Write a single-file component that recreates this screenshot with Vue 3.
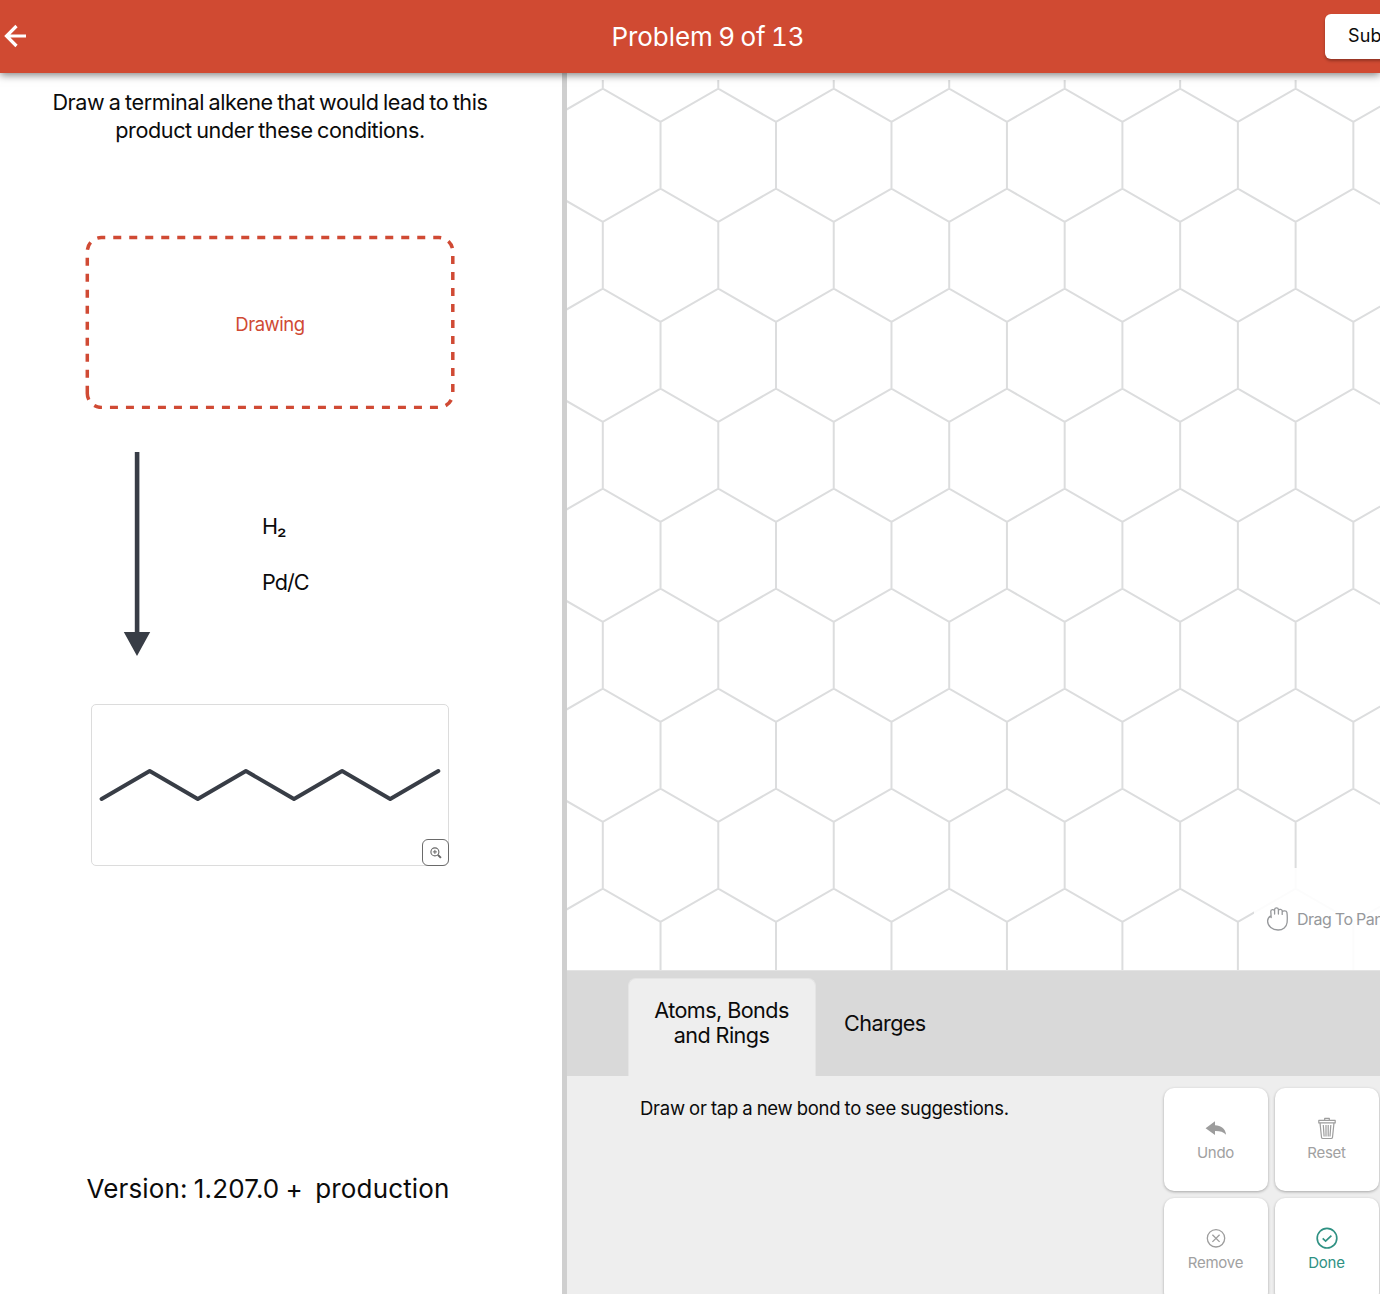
<template>
  <div class="app">
    <header class="header">
      <button class="back" aria-label="Back">
        <svg width="24" height="24" viewBox="0 0 24 24" fill="none" stroke="#fff" stroke-width="3.2">
          <path d="M23 12H4M13.500 2L3.500 12l10 10" />
        </svg>
      </button>
      <h1>Problem 9 of 13</h1>
      <button class="submit">Submit</button>
    </header>

    <main class="main">
      <section class="problem">
        <p class="prompt">Draw a terminal alkene that would lead to this<br />product under these conditions.</p>

        <div class="drop-target">
          <svg class="dashes" width="370" height="174" viewBox="0 0 370 174">
            <path
              d="M2.3 158.7V16.5a14 14 0 0 1 14-14H353.8a14 14 0 0 1 14 14V158.4a14 14 0 0 1-14 14H16.3a14 14 0 0 1-14-14"
              fill="none"
              stroke="#d04a34"
              stroke-width="3.5"
              stroke-dasharray="8 8"
            />
          </svg>
          <span>Drawing</span>
        </div>

        <div class="reaction">
          <svg width="28" height="205" viewBox="0 0 28 205" fill="#383d46">
            <path d="M11.8 0h4.6v180h10.8L14 204 .8 180h11z" />
          </svg>
          <div class="reagents">
            <p v-for="reagent in reagents" :key="reagent">{{ reagent }}</p>
          </div>
        </div>

        <div class="product">
          <svg width="356" height="160" viewBox="0 0 356 160">
            <polyline
              :points="chain"
              fill="none"
              stroke="#383d46"
              stroke-width="4"
              stroke-linecap="round"
              stroke-linejoin="round"
            />
          </svg>
          <button class="zoom" aria-label="Zoom">
            <svg width="12" height="12" viewBox="0 0 12 12" fill="none" stroke="#666">
              <circle cx="4.9" cy="4.9" r="4" stroke-width="1.1" />
              <path d="M2.9 4.9h4M4.9 2.9v4" stroke-width="1" />
              <path d="M7.9 7.9l3 3" stroke-width="2" />
            </svg>
          </button>
        </div>

        <p class="version">Version: 1.207.0 +&nbsp; production</p>
      </section>

      <section class="editor">
        <div class="board">
          <svg width="813" height="890" viewBox="0 0 813 890">
            <path :d="grid" fill="none" stroke="#dcddde" stroke-width="2" />
          </svg>
          <div class="pan-hint">
            <svg width="24" height="26" viewBox="0 0 24 26" fill="none" stroke="#96989b" stroke-width="1.3" stroke-linejoin="round" stroke-linecap="round">
              <path d="M5.2 11.500L4.800 5.400c.1-2.200 3.200-2.400 3.800-.6V3.400c.3-2 3.500-2 3.800 0v.9c.8-1.500 3.600-1.200 3.800.6v.7c1-1.100 4.300-1 4.700.7.500 3.200.4 7.600.2 10.200-.5 4.500-4.200 7.500-9 7.500-5.600 0-10.500-3.700-10.500-9 0-2.400 1.200-4 3.200-5.100M8.600 4.800v3.200M12.400 4.300v3.700M16.200 5.600v2.800" />
            </svg>
            <span>Drag To Pan</span>
          </div>
        </div>

        <nav class="tabs">
          <button class="tab active">Atoms, Bonds<br />and Rings</button>
          <button class="tab">Charges</button>
        </nav>

        <div class="palette">
          <p class="suggestion">Draw or tap a new bond to see suggestions.</p>
          <div class="actions">
            <button class="action">
              <svg width="24" height="24" viewBox="0 0 24 24" fill="#9d9d9d">
                <path d="M1.6 12.2L11 5.2v4.1c6 .3 10.3 3.1 11.1 9.5-2.8-3.3-6.5-4-11.1-3.9v4z" />
              </svg>
              Undo
            </button>
            <button class="action">
              <svg width="24" height="24" viewBox="0 0 24 24" fill="none" stroke="#9d9d9d" stroke-width="1.2" stroke-linejoin="round">
                <path d="M9.7 4V2.300h4.600V4M3.800 4.300h16.400v2.600H3.800zM5 6.900l1.500 14.400q.2 1.200 1.300 1.200h8.400q1.100 0 1.300-1.200L19 6.900M8.300 9l.8 11.500M11 9v11.500M13.200 9v11.500M15.800 9L15 20.500" />
              </svg>
              Reset
            </button>
            <button class="action">
              <svg width="24" height="24" viewBox="0 0 24 24" fill="none" stroke="#9d9d9d" stroke-width="1.3">
                <circle cx="12" cy="12.3" r="8.7" />
                <path d="M8.4 8.7l7.2 7.2M15.600 8.700l-7.200 7.200" />
              </svg>
              Remove
            </button>
            <button class="action done">
              <svg width="24" height="24" viewBox="0 0 24 24" fill="none" stroke="#2f9183">
                <circle cx="12" cy="12.2" r="9.8" stroke-width="1.7" />
                <path d="M7.7 12.4l2.9 2.7 5.8-5.5" stroke-width="1.7" />
              </svg>
              Done
            </button>
          </div>
        </div>
      </section>
    </main>
  </div>
</template>

<script setup>
import { computed } from 'vue'

const reagents = ['H₂', 'Pd/C']

// Zigzag skeleton of the product, eight carbons
const chain = Array.from({ length: 8 }, (_, i) => `${9.6 + i * 48.1},${i % 2 ? 66 : 94}`).join(' ')

// Hexagonal drawing grid
const HALF = 57.735
const grid = computed(() => {
  const originX = 35.8
  const originY = 8.6
  let d = ''
  for (let row = -1; row < 10; row++) {
    const top = originY + row * 100
    const odd = Math.abs(row % 2)
    for (let col = -2; col < 15; col++) {
      const x = originX + col * HALF
      const low = Math.abs(col % 2) !== odd
      d += `${col === -2 ? 'M' : 'L'}${x.toFixed(2)} ${(low ? top + 33.3 : top).toFixed(2)}`
    }
    for (let col = -2; col < 15; col++) {
      const low = Math.abs(col % 2) !== odd
      if (low) d += `M${(originX + col * HALF).toFixed(2)} ${(top + 33.3).toFixed(2)}v66.7`
    }
  }
  return d
})
</script>

<style>
body {
  margin: 0;
  overflow: hidden;
}
</style>

<style scoped>
.app {
  display: flex;
  flex-direction: column;
  width: 1380px;
  height: 1294px;
  overflow: hidden;
  background: #fff;
  color: #0b0b0b;
  font-family: Inter, sans-serif;
}

p,
h1 {
  margin: 0;
  font-weight: 400;
}

button {
  font: inherit;
  color: inherit;
  border: none;
  padding: 0;
  background: none;
  cursor: pointer;
  letter-spacing: inherit;
}

.header {
  position: relative;
  z-index: 1;
  flex: none;
  box-sizing: border-box;
  display: flex;
  align-items: center;
  justify-content: space-between;
  height: 73px;
  padding-left: 3px;
  background: #d04a32;
  box-shadow: 0 2px 8px rgba(0, 0, 0, 0.5);
}

.header h1 {
  color: #fff;
  font-size: 26px;
  line-height: 32px;
  margin-left: 64px;
  font-variant-numeric: tabular-nums;
  letter-spacing: -0.05px;
  word-spacing: -1.5px;
}

.back {
  display: flex;
  width: 24px;
  padding-bottom: 2px;
}

.submit {
  flex: none;
  height: 45px;
  width: 106px;
  padding-bottom: 3px;
  margin-right: -51px;
  border-radius: 6px;
  background: #fff;
  font-size: 18px;
  letter-spacing: 0.1px;
  box-shadow: 0 2px 3px rgba(0, 0, 0, 0.3);
}

.main {
  flex: 1;
  display: flex;
  min-height: 0;
}

.problem {
  flex: none;
  box-sizing: border-box;
  display: flex;
  flex-direction: column;
  align-items: center;
  width: 567px;
  padding: 15px 22px 0 0;
  border-right: 5px solid #cfcfcf;
}

.prompt {
  font-size: 21.6px;
  line-height: 28px;
  letter-spacing: -0.4px;
  word-spacing: -1.2px;
  text-align: center;
}

.drop-target {
  display: grid;
  place-items: center;
  width: 370px;
  height: 174px;
  margin-top: 91px;
  color: #d04a34;
  font-size: 18.5px;
  letter-spacing: -0.45px;
}

.drop-target > * {
  grid-area: 1 / 1;
}

.drop-target span {
  padding-top: 4px;
}

.reaction {
  display: flex;
  align-items: center;
  gap: 111px;
  width: 294px;
  margin-top: 43px;
}

.reagents {
  display: flex;
  flex-direction: column;
  gap: 28px;
  padding-bottom: 2px;
  font-size: 21.6px;
  line-height: 28px;
  letter-spacing: -1px;
}

.product {
  position: relative;
  box-sizing: border-box;
  width: 358px;
  height: 162px;
  margin-top: 47px;
  border: 1px solid #dcdcdc;
  border-radius: 5px;
}

.zoom {
  position: absolute;
  right: -1px;
  bottom: -1px;
  box-sizing: border-box;
  display: flex;
  align-items: center;
  justify-content: center;
  width: 27px;
  height: 27px;
  border: 1.5px solid #6a6a6a;
  border-radius: 6px;
  background: #fff;
}

.version {
  margin: 306px 4px 0 0;
  font-size: 26px;
  line-height: 34px;
  letter-spacing: 0.15px;
  word-spacing: -1.3px;
}

.editor {
  flex: 1;
  display: flex;
  flex-direction: column;
  min-width: 0;
}

.board {
  position: relative;
  flex: none;
  height: 890px;
  margin-top: 7px;
  overflow: hidden;
}

.pan-hint {
  position: absolute;
  left: 687px;
  bottom: 0;
  box-sizing: border-box;
  display: flex;
  align-items: center;
  gap: 7px;
  width: 160px;
  height: 102px;
  padding-left: 12px;
  background: rgba(255, 255, 255, 0.9);
  color: #96989b;
  font-size: 16px;
  letter-spacing: -0.5px;
  word-spacing: -0.5px;
  white-space: nowrap;
}

.tabs {
  flex: none;
  box-sizing: border-box;
  display: flex;
  height: 106px;
  padding: 7px 0 0 61px;
  border-top: 1px solid #e3e3e3;
  background: #d9d9d9;
  font-size: 21.6px;
  line-height: 25px;
  letter-spacing: -0.57px;
}

.tab {
  box-sizing: border-box;
  padding: 0 28px 7px;
  line-height: 25px;
}

.tab.active {
  width: 188px;
  padding: 0 1px 9px 0;
  border: 1px solid #e5e5e5;
  border-bottom: none;
  border-radius: 8px 8px 0 0;
  background: #eee;
}

.palette {
  flex: 1;
  display: flex;
  justify-content: space-between;
  min-height: 0;
  padding-left: 73px;
  background: #eee;
}

.suggestion {
  margin-top: 20px;
  font-size: 18.5px;
  line-height: 25px;
  letter-spacing: -0.25px;
  word-spacing: -0.7px;
}

.actions {
  display: grid;
  grid-template-columns: 104px 104px;
  grid-auto-rows: 103.5px;
  gap: 7px;
  padding: 11.5px 1.5px 0 0;
}

.action {
  display: flex;
  flex-direction: column;
  align-items: center;
  justify-content: center;
  gap: 3px;
  border-radius: 10px;
  background: #fff;
  color: #a1a1a1;
  font-size: 15px;
  line-height: 20px;
  letter-spacing: -0.25px;
  box-shadow: 0 1px 3px rgba(0, 0, 0, 0.3);
}

.action.done {
  color: #2f9183;
}
</style>
